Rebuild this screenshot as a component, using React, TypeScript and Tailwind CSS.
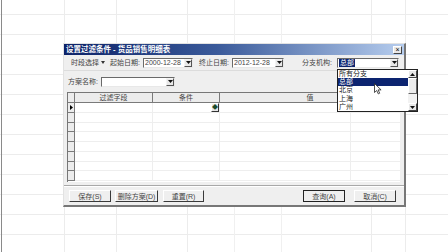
import React from "react";

const font = "font-['Liberation_Sans','Noto_Sans_CJK_SC',sans-serif]";

function DropBtn({ className = "" }: { className?: string }) {
  return (
    <div
      className={`flex h-full w-[8px] shrink-0 items-center justify-center border-l border-t border-[#f4f4f4] border-r border-b border-r-[#555] border-b-[#555] bg-[#e8e8e8] ${className}`}
    >
      <svg width="5" height="3" viewBox="0 0 5 3">
        <path d="M0 0h5L2.5 3z" fill="#111" />
      </svg>
    </div>
  );
}

function Field({ w, text, highlight = false }: { w: string; text?: string; highlight?: boolean }) {
  return (
    <div className={`flex h-[10px] ${w} items-stretch border border-t-[#6a6a6a] border-l-[#6a6a6a] border-r-[#e8e8e8] border-b-[#e8e8e8] bg-white`}>
      <div className="flex flex-1 items-center overflow-hidden pl-[1px]">
        {text &&
          (highlight ? (
            <span className="bg-[#0c2470] px-[1px] text-[7px] leading-[8px] text-white">{text}</span>
          ) : (
            <span className="text-[7px] leading-[8px] text-[#444]">{text}</span>
          ))}
      </div>
      <DropBtn />
    </div>
  );
}

function Btn({ label, w, ml, def = false }: { label: string; w: string; ml: string; def?: boolean }) {
  return (
    <div
      className={`flex h-[12px] ${w} ${ml} items-center justify-center bg-[#efefef] ${
        def
          ? "border border-[#222]"
          : "border border-t-white border-l-white border-r-[#3a3a3a] border-b-[#3a3a3a]"
      }`}
    >
      <span className="text-[7px] leading-none text-[#444]">{label}</span>
    </div>
  );
}

export default function App() {
  const bgCols = [
    "w-[2px] border-r border-[#8a8a8a]",
    "w-[63px] border-r border-[#ececec]",
    "w-[52px] border-r border-[#ececec]",
    "w-[71px] border-r border-[#ececec]",
    "w-[47px] border-r border-[#f0f0f0]",
    "w-[47px] border-r border-[#f0f0f0]",
    "w-[90px] border-r border-[#ececec]",
    "w-[34px] border-r border-[#ececec]",
  ];
  const rows = Array.from({ length: 8 });

  return (
    <div
      className={`relative h-[252px] w-[448px] overflow-hidden bg-white ${font} bg-[repeating-linear-gradient(to_bottom,transparent_0_14px,#ececec_14px_15px,transparent_15px_20px)]`}
    >
      {/* spreadsheet columns behind */}
      <div className="flex h-full">
        {bgCols.map((c, i) => (
          <div key={i} className={`h-full ${c}`} />
        ))}
      </div>

      {/* dialog */}
      <div className="absolute left-[63px] top-[43px] flex h-[164px] w-[343px] flex-col border-l border-t border-[#e2e2e2] border-r-2 border-b-2 border-r-[#777] border-b-[#777] bg-[#efefef]">
        {/* title */}
        <div className="flex h-[11px] items-center justify-between bg-[linear-gradient(to_right,#0c2268,#3a5a9a_45%,#b6cdee)] pl-[2px] pr-[2px]">
          <span className="text-[7.5px] font-bold leading-[10px] text-white">设置过滤条件 - 货品销售明细表</span>
          <div className="flex h-[8px] w-[9px] items-center justify-center border border-t-white border-l-white border-r-[#444] border-b-[#444] bg-[#e8e8e8]">
            <span className="text-[7px] leading-none text-black">×</span>
          </div>
        </div>

        {/* row 1 */}
        <div className="flex h-[16px] items-center border-b border-[#dcdcdc]">
          <span className="ml-[7px] flex w-[34px] items-center gap-[2px] text-[7px] leading-none text-[#444]">
            时段选择
            <svg width="4" height="3" viewBox="0 0 4 3">
              <path d="M0 0h4L2 3z" fill="#333" />
            </svg>
          </span>
          <span className="ml-[5px] w-[33px] text-[7px] leading-none text-[#444]">起始日期:</span>
          <Field w="w-[50px]" text="2000-12-28" />
          <span className="ml-[6px] w-[33px] text-[7px] leading-none text-[#444]">终止日期:</span>
          <Field w="w-[52px]" text="2012-12-28" />
          <span className="ml-[18px] w-[35px] text-[7px] leading-none text-[#444]">分支机构:</span>
          <Field w="w-[62px]" text="总部" highlight />
        </div>

        {/* row 2 */}
        <div className="flex h-[21px] items-center">
          <span className="ml-[4px] w-[33px] text-[7px] leading-none text-[#444]">方案名称:</span>
          <Field w="w-[74px]" />
        </div>

        {/* grid */}
        <div className="ml-[3px] flex h-[90px] w-[333px] flex-col overflow-hidden border-l border-t border-[#777] bg-white">
          <div className="flex h-[10px] shrink-0 bg-[#ececec] text-[7px] leading-none text-[#444]">
            <div className="w-[7px] border-r border-b border-[#7a7a7a]" />
            <div className="flex w-[78px] items-center justify-center border-r border-b border-[#7a7a7a]">过滤字段</div>
            <div className="flex w-[67px] items-center justify-center border-r border-b border-[#7a7a7a]">条件</div>
            <div className="flex flex-1 items-center justify-center border-b border-[#7a7a7a]">值</div>
          </div>
          {rows.map((_, i) => (
            <div key={i} className="flex h-[9.75px] shrink-0">
              <div className="flex w-[7px] items-center justify-center border-r border-b border-[#7a7a7a] bg-[#ececec]">
                {i === 0 && (
                  <svg width="3" height="5" viewBox="0 0 3 5">
                    <path d="M0 0l3 2.5L0 5z" fill="#000" />
                  </svg>
                )}
              </div>
              <div className="w-[78px] border-r border-b border-[#eeeeee]" />
              <div className="flex w-[67px] justify-end border-r border-b border-[#eeeeee]">
                {i === 0 && (
                  <div className="flex w-[8px] items-center justify-center border border-t-white border-l-white border-r-[#333] border-b-[#333] bg-[#e6e6e6]">
                    <span className="text-[6px] leading-none text-[#1a4a2a]">◆</span>
                  </div>
                )}
              </div>
              <div className="w-[131px] border-r border-b border-[#eeeeee]" />
              <div className="flex-1 border-b border-[#eeeeee]" />
            </div>
          ))}
        </div>

        {/* separator */}
        <div className="mt-[3px] border-t border-[#a8a8a8] border-b border-b-white" />

        {/* buttons */}
        <div className="mt-[3px] flex items-center">
          <Btn label="保存(S)" w="w-[42px]" ml="ml-[5px]" />
          <Btn label="删除方案(D)" w="w-[43px]" ml="ml-[4px]" />
          <Btn label="重置(R)" w="w-[41px]" ml="ml-[5px]" />
          <Btn label="查询(A)" w="w-[42px]" ml="ml-[99px]" def />
          <Btn label="取消(C)" w="w-[42px]" ml="ml-[9px]" />
        </div>
      </div>

      {/* dropdown list */}
      <div className="absolute left-[337px] top-[69px] flex h-[43px] w-[81px] border border-[#222] bg-white">
        <div className="flex flex-1 flex-col text-[7px] leading-[8.2px] text-[#222]">
          <div className="pl-[1px]">所有分支</div>
          <div className="bg-[#0c2470] pl-[1px] text-white">总部</div>
          <div className="pl-[1px]">北京</div>
          <div className="pl-[1px]">上海</div>
          <div className="pl-[1px]">广州</div>
        </div>
        <div className="flex w-[9px] flex-col bg-[#f2f2f2]">
          <div className="flex h-[8px] items-center justify-center border border-t-white border-l-white border-r-[#444] border-b-[#444] bg-[#e8e8e8]">
            <svg width="5" height="3" viewBox="0 0 5 3">
              <path d="M0 3h5L2.5 0z" fill="#111" />
            </svg>
          </div>
          <div className="h-[16px] border border-t-white border-l-white border-r-[#666] border-b-[#666] bg-[#ececec]" />
          <div className="flex-1" />
          <div className="flex h-[8px] items-center justify-center border border-t-white border-l-white border-r-[#444] border-b-[#444] bg-[#e8e8e8]">
            <svg width="5" height="3" viewBox="0 0 5 3">
              <path d="M0 0h5L2.5 3z" fill="#111" />
            </svg>
          </div>
        </div>
      </div>

      {/* cursor */}
      <svg className="absolute left-[374px] top-[83px]" width="8" height="12" viewBox="0 0 8 12">
        <path d="M0.5 0.5v9l2.2-2 1.6 3.4 1.4-.7-1.6-3.3h3z" fill="#fff" stroke="#222" strokeWidth="0.8" />
      </svg>
    </div>
  );
}
